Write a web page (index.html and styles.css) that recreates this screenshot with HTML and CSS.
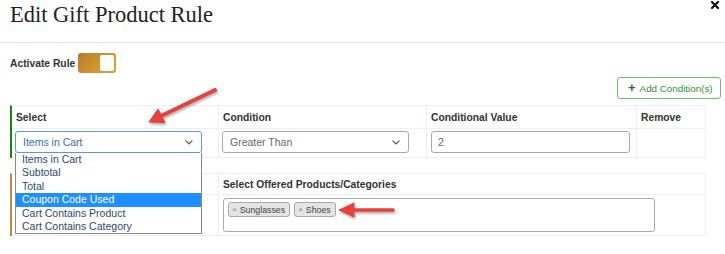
FILE: index.html
```html
<!DOCTYPE html>
<html lang="en">
<head>
    <meta charset="UTF-8">
    <title>Edit Gift Product Rule</title>
    <link rel="stylesheet" href="styles.css">
</head>
<body>
    <div class="modal">
        <header class="modal-header">
            <h1>Edit Gift Product Rule</h1>
            <button class="close-btn" aria-label="Close">
                <svg width="8" height="8" viewBox="0 0 8 8"><path d="M1 1 L7 7 M7 1 L1 7" stroke="#111" stroke-width="2.2" stroke-linecap="square"/></svg>
            </button>
        </header>

        <div class="modal-body">
            <div class="activate-row">
                <span class="activate-label">Activate Rule</span>
                <span class="toggle"><span class="toggle-knob"></span></span>
            </div>

            <div class="actions-row">
                <button class="add-btn"><span class="plus">+</span> Add Condition(s)</button>
            </div>

            <div class="rule-table conditions">
                <div class="cell head">Select</div>
                <div class="cell head">Condition</div>
                <div class="cell head">Conditional Value</div>
                <div class="cell head">Remove</div>

                <div class="cell body select-cell">
                    <div class="select focused">
                        <span>Items in Cart</span>
                        <svg width="8" height="5" viewBox="0 0 8 5"><path d="M0.6 0.6 L4 4 L7.4 0.6" fill="none" stroke="#555" stroke-width="1.2"/></svg>
                    </div>
                    <ul class="dropdown">
                        <li>Items in Cart</li>
                        <li>Subtotal</li>
                        <li>Total</li>
                        <li class="active">Coupon Code Used</li>
                        <li>Cart Contains Product</li>
                        <li>Cart Contains Category</li>
                    </ul>
                </div>
                <div class="cell body">
                    <div class="select">
                        <span>Greater Than</span>
                        <svg width="8" height="5" viewBox="0 0 8 5"><path d="M0.6 0.6 L4 4 L7.4 0.6" fill="none" stroke="#555" stroke-width="1.2"/></svg>
                    </div>
                </div>
                <div class="cell body">
                    <div class="text-input">2</div>
                </div>
                <div class="cell body"></div>
            </div>

            <div class="rule-table offers">
                <div class="cell head"></div>
                <div class="cell head">Select Offered Products/Categories</div>
                <div class="cell body tall"></div>
                <div class="cell body tall">
                    <div class="multi-select">
                        <span class="tag"><span class="tag-x">×</span>Sunglasses</span>
                        <span class="tag"><span class="tag-x">×</span>Shoes</span>
                    </div>
                </div>
            </div>
        </div>

        <svg class="annotations" width="725" height="254" viewBox="0 0 725 254">
            <g fill="#e8403c" stroke="#e8403c">
                <line x1="215" y1="90" x2="161" y2="116" stroke-width="4" stroke-linecap="round"/>
                <polygon points="149,122 165,122.5 158,109" stroke-width="1" stroke-linejoin="round"/>
                <line x1="393" y1="210" x2="352" y2="210" stroke-width="3.5" stroke-linecap="round"/>
                <polygon points="339,210 354,203 354,217" stroke-width="1" stroke-linejoin="round"/>
            </g>
        </svg>
    </div>
</body>
</html>
```

FILE: styles.css
```css
body {
    margin: 0;
    background-color: #fff;
    font-family: "Liberation Sans", Arial, sans-serif;
    color: #333;
}

.modal {
    position: relative;
    width: 725px;
    height: 254px;
    overflow: hidden;
}

.modal-header {
    display: flex;
    justify-content: space-between;
    align-items: flex-start;
    height: 42px;
    padding-left: 10px;
    border-bottom: 1px solid #e5e5e5;
}

.modal-header h1 {
    margin: 0;
    padding-top: 2px;
    font-family: "Liberation Serif", "Times New Roman", serif;
    font-size: 22.5px;
    font-weight: normal;
    line-height: 26px;
    color: #222;
}

.close-btn {
    margin: 1px 6px 0 0;
    padding: 0;
    border: none;
    background: none;
    line-height: 0;
}

.modal-body {
    padding: 10px 4px 0 10px;
}

.activate-row {
    display: flex;
    align-items: center;
    gap: 3px;
    height: 20px;
}

.activate-label {
    font-size: 10.3px;
    font-weight: bold;
    color: #333;
}

.toggle {
    display: flex;
    align-items: center;
    justify-content: flex-end;
    box-sizing: border-box;
    width: 38px;
    height: 20px;
    padding-right: 2px;
    border-radius: 3px;
    background: linear-gradient(135deg, #b37a2c 0%, #d0922f 50%, #e0a437 100%);
}

.toggle-knob {
    width: 14px;
    height: 16px;
    border-radius: 2px;
    background-color: #fff;
}

.actions-row {
    display: flex;
    justify-content: flex-end;
    margin-top: 4px;
}

.add-btn {
    display: flex;
    align-items: center;
    gap: 4px;
    box-sizing: border-box;
    height: 22px;
    width: 104px;
    padding: 0 0 0 10px;
    border: 1px solid #6cbf6c;
    border-radius: 3px;
    background-color: #fff;
    font-family: "Liberation Sans", Arial, sans-serif;
    font-size: 9.8px;
    color: #2f8f2f;
}

.add-btn .plus {
    font-size: 13px;
    font-weight: bold;
    line-height: 10px;
    color: #1f6f1f;
}

.rule-table {
    display: grid;
    width: 694px;
    border-top: 1px solid #eeeeee;
}

.conditions {
    grid-template-columns: 207px 208px 210px 69px;
    margin-top: 6px;
    border-left: 2px solid #13890f;
}

.offers {
    grid-template-columns: 207px 487px;
    margin-top: 15px;
    border-left: 2px solid #bf8a3c;
}

.cell {
    box-sizing: border-box;
    border-right: 1px solid #eeeeee;
    border-bottom: 1px solid #eeeeee;
}

.cell.head {
    display: flex;
    align-items: center;
    height: 23px;
    padding-left: 4px;
    font-size: 10.3px;
    font-weight: bold;
    color: #333;
}

.offers .cell.head {
    height: 21px;
}

.cell.body {
    height: 29px;
    padding: 2px 3px;
}

.cell.body.tall {
    height: 41px;
    padding: 3px 4px;
}

.select-cell {
    position: relative;
    z-index: 2;
}

.select,
.text-input {
    display: flex;
    align-items: center;
    justify-content: space-between;
    box-sizing: border-box;
    width: 187px;
    height: 22px;
    padding: 0 8px 0 7px;
    border: 1px solid #aaa;
    border-radius: 3px;
    background-color: #fff;
    font-size: 10.5px;
    color: #666;
}

.select.focused {
    border-color: #5b9bd5;
    color: #41709f;
}

.text-input {
    width: 199px;
    margin-left: 1px;
    padding-left: 6px;
}

.dropdown {
    position: absolute;
    top: 24px;
    left: 3px;
    box-sizing: border-box;
    width: 187px;
    margin: 0;
    padding: 0;
    list-style: none;
    border: 1px solid #8a8a8a;
    border-top: none;
    background-color: #fff;
}

.dropdown li {
    height: 13.4px;
    padding-left: 6px;
    font-size: 10.5px;
    line-height: 13.4px;
    color: #2b4a70;
}

.dropdown li.active {
    background-color: #1e8fff;
    color: #fff;
}

.multi-select {
    display: flex;
    align-items: flex-start;
    gap: 4px;
    box-sizing: border-box;
    width: 432px;
    height: 34px;
    padding: 3px 4px;
    border: 1px solid #aaa;
    border-radius: 3px;
}

.tag {
    display: flex;
    align-items: center;
    box-sizing: border-box;
    height: 15px;
    padding: 0 4px 0 3px;
    border: 1px solid #aaa;
    border-radius: 3px;
    background-color: #e4e4e4;
    font-size: 8.8px;
    color: #444;
}

.tag-x {
    margin-right: 3px;
    font-size: 8px;
    color: #888;
}

.annotations {
    position: absolute;
    top: 0;
    left: 0;
    pointer-events: none;
    filter: drop-shadow(1px 2px 1px rgba(0, 0, 0, 0.3));
}
```
